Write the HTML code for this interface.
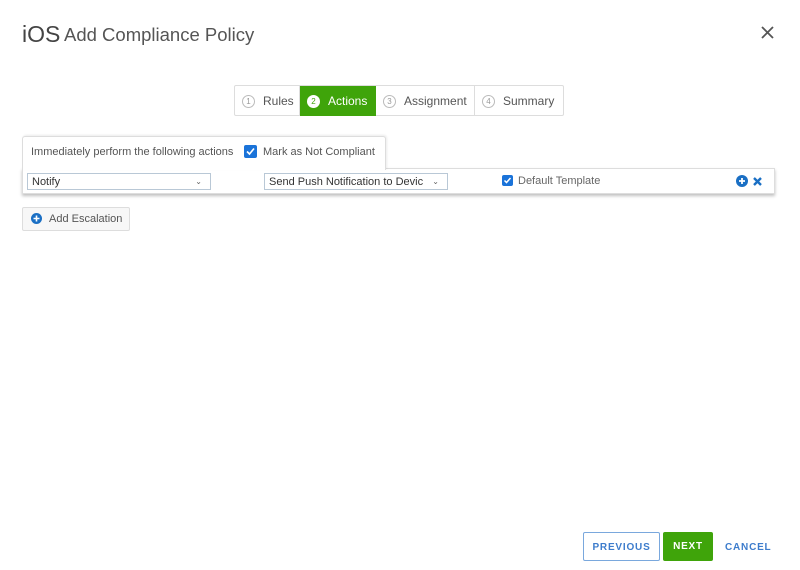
<!DOCTYPE html>
<html><head><style>
*{box-sizing:border-box;margin:0;padding:0}
body{width:800px;height:570px;background:#fff;font-family:"Liberation Sans",sans-serif;color:#555;position:relative;overflow:hidden}
.a{position:absolute}
.num{display:inline-block;width:13px;height:13px;border:1px solid #bbb;border-radius:50%;font-size:8px;text-align:center;line-height:11px;color:#999;margin-right:8px;vertical-align:1px}
.seg{position:absolute;top:0;height:30px;line-height:30px;font-size:12px;color:#555;padding-left:7px;border-right:1px solid #ddd}
.sel{position:absolute;height:17px;border:1px solid #b9c8d6;font-size:11px;line-height:16px;padding-left:4px;color:#333;background:#fff}
.cb{position:absolute;width:12px;height:12px;background:#1a73d9;border-radius:2px}
</style></head><body>
<div class="a" style="left:22px;top:21px;font-size:23px;color:#444">iOS</div>
<div class="a" style="left:64px;top:24px;font-size:18.5px;color:#555">Add Compliance Policy</div>
<svg class="a" style="left:761px;top:26px" width="13" height="13"><path d="M1 1L12 12M12 1L1 12" stroke="#555" stroke-width="1.8"/></svg>

<div class="a" style="left:234px;top:85px;width:330px;height:31px;border:1px solid #ddd;border-radius:2px">
<div class="seg" style="left:0;width:65px"><span class="num">1</span>Rules</div>
<div class="seg" style="left:65px;width:76px;background:#3fa40a;color:#fff;border:none"><span class="num" style="background:#fff;border-color:#fff;color:#3fa40a">2</span>Actions</div>
<div class="seg" style="left:141px;width:99px"><span class="num">3</span>Assignment</div>
<div class="seg" style="left:240px;width:88px;border:none"><span class="num">4</span>Summary</div>
</div>

<div class="a" style="left:22px;top:168px;width:753px;height:26px;border:1px solid #ddd;box-shadow:0 2px 3px rgba(0,0,0,.25);background:#fff"></div>
<div class="a" style="left:22px;top:136px;width:364px;height:34px;border:1px solid #ddd;border-bottom:none;border-radius:3px 3px 0 0;background:#fff;box-shadow:1px -1px 2px rgba(0,0,0,.08)"></div>
<div class="a" style="left:31px;top:146px;font-size:11px;color:#555">Immediately perform the following actions</div>
<div class="cb" style="left:244px;top:145px;width:13px;height:13px"></div>
<svg class="a" style="left:244px;top:145px" width="13" height="13"><path d="M3 6.5L5.5 9L10 3.5" stroke="#fff" stroke-width="1.6" fill="none"/></svg>
<div class="a" style="left:263px;top:146px;font-size:11px;color:#555">Mark as Not Compliant</div>

<div class="sel" style="left:27px;top:173px;width:184px">Notify<span style="position:absolute;right:8px;font-size:8px;color:#666">&#8964;</span></div>
<div class="sel" style="left:264px;top:173px;width:184px">Send Push Notification to Devic<span style="position:absolute;right:8px;font-size:8px;color:#666">&#8964;</span></div>
<div class="cb" style="left:502px;top:175px;width:11px;height:11px"></div>
<svg class="a" style="left:502px;top:175px" width="11" height="11"><path d="M2.5 5.5L4.5 7.5L8.5 3" stroke="#fff" stroke-width="1.5" fill="none"/></svg>
<div class="a" style="left:518px;top:175px;font-size:11px;color:#666">Default Template</div>
<svg class="a" style="left:736px;top:175px" width="12" height="12"><circle cx="6" cy="6" r="6" fill="#1a6fc4"/><path d="M6 3V9M3 6H9" stroke="#fff" stroke-width="1.8"/></svg>
<svg class="a" style="left:752px;top:176px" width="11" height="11"><path d="M2 2L9 9M9 2L2 9" stroke="#1a6fc4" stroke-width="2.4"/></svg>

<div class="a" style="left:22px;top:207px;width:108px;height:24px;border:1px solid #ddd;border-radius:2px;background:#f7f7f7"></div>
<svg class="a" style="left:31px;top:213px" width="11" height="11"><circle cx="5.5" cy="5.5" r="5.5" fill="#1a6fc4"/><path d="M5.5 2.5V8.5M2.5 5.5H8.5" stroke="#fff" stroke-width="1.6"/></svg>
<div class="a" style="left:49px;top:213px;font-size:11px;color:#555">Add Escalation</div>

<div class="a" style="left:583px;top:532px;width:77px;height:29px;border:1px solid #7aa8dd;border-radius:2px;font-size:10px;font-weight:bold;color:#3d7ccc;text-align:center;line-height:29px;letter-spacing:.8px">PREVIOUS</div>
<div class="a" style="left:663px;top:532px;width:50px;height:29px;background:#3fa40a;border-radius:2px;font-size:10px;font-weight:bold;color:#fff;text-align:center;line-height:30px;letter-spacing:.8px">NEXT</div>
<div class="a" style="left:725px;top:542px;font-size:10px;font-weight:bold;color:#3d7ccc;letter-spacing:.8px">CANCEL</div>
</body></html>
